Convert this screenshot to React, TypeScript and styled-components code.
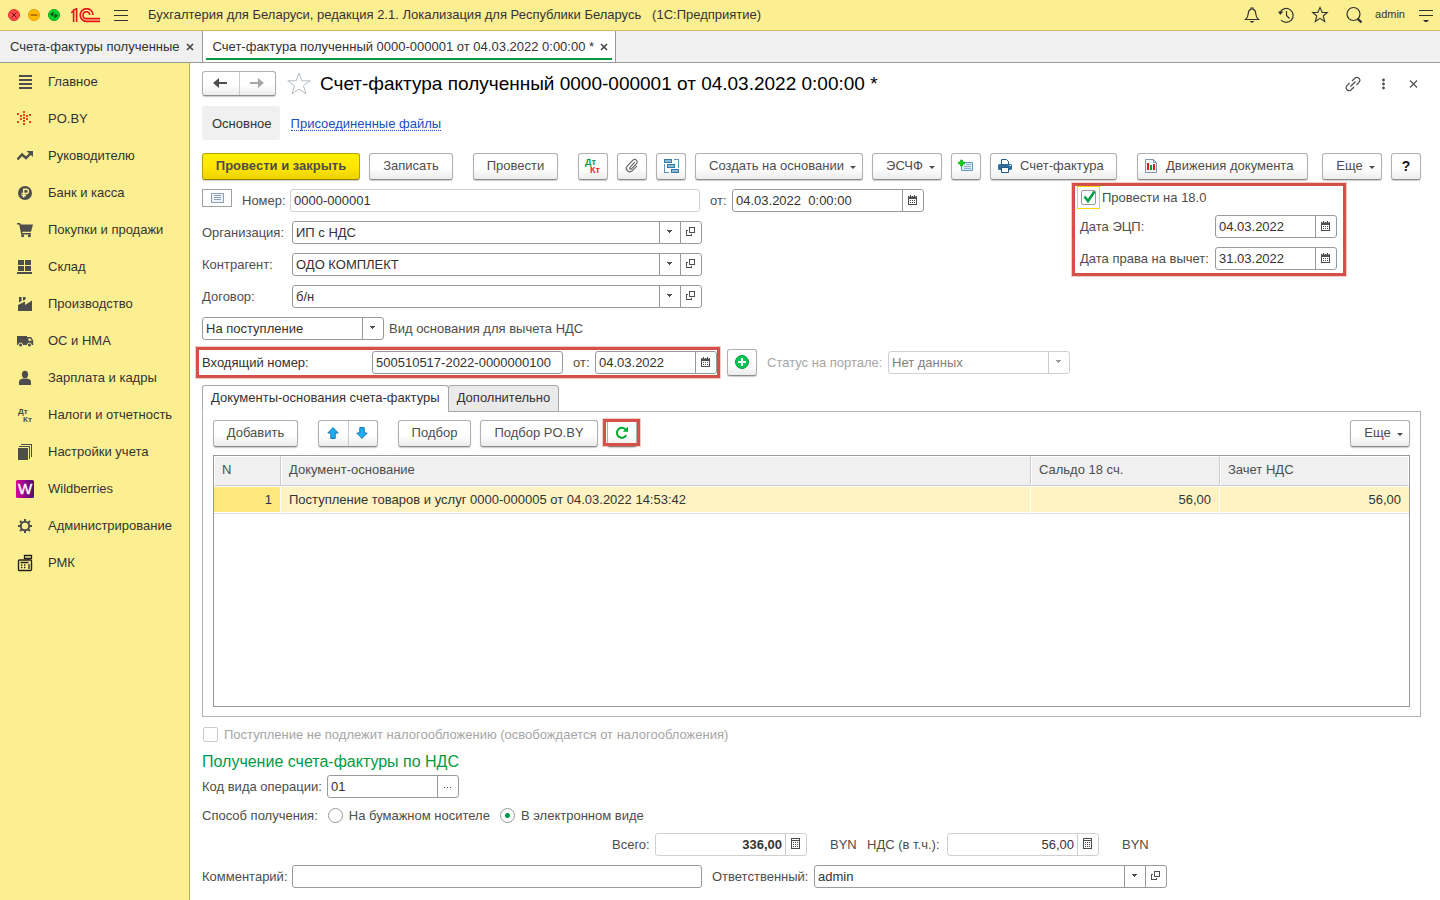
import React from "react";
import styled, { createGlobalStyle, css } from "styled-components";

const GlobalStyle = createGlobalStyle`
  *, *::before, *::after { box-sizing: border-box; }
  body { margin: 0; background: #fff; }
  body, button, input, select {
    font-family: "Liberation Sans", Arial, sans-serif;
    font-size: 13px;
    color: #333;
  }
  button, input, select { margin: 0; padding: 0; border: 0; background: none; outline: none; border-radius: 0; }
  svg { display: block; flex: none; }
`;

const color = {
  brand: "#fcef92",
  ink: "#333",
  label: "#4d4d4d",
  line: "#999",
  faint: "#ccc",
  green: "#009a44",
  mark: "#d35148",
};

/* ---------- shell ---------- */

const Shell = styled.div`
  display: flex;
  flex-direction: column;
  min-height: 100vh;
`;

const TitleBar = styled.header`
  display: flex;
  align-items: center;
  height: 31px;
  padding: 0 7px 0 8px;
  background: ${color.brand};
  border-bottom: 1px solid #c9bc5e;
`;

const WindowButtons = styled.div`
  display: flex;
  gap: 8px;
  margin-right: 11px;
`;

const PlainButton = styled.button`
  display: flex;
  align-items: center;
  justify-content: center;
`;

const AppTitle = styled.span`
  flex: 1;
  margin-left: 20px;
  padding-bottom: 2px;
  white-space: pre;
`;

const HeaderTools = styled.div`
  display: flex;
  align-items: center;
  gap: 16px;
`;

const UserName = styled.span`
  margin: 0 14px 0 12px;
  padding-bottom: 2px;
  font-size: 11px;
`;

const WindowTabs = styled.nav`
  display: flex;
  height: 32px;
  background: #f0f0f0;
  border-bottom: 1px solid ${color.line};
`;

const WindowTab = styled.div<{ $active?: boolean }>`
  position: relative;
  display: flex;
  align-items: center;
  gap: 6px;
  padding: 0 8px 0 10px;
  border-right: 1px solid ${color.line};
  ${(p) =>
    p.$active &&
    css`
      padding-right: 7px;
      background: #fff;
      &::after {
        content: "";
        position: absolute;
        left: 3px;
        right: 3px;
        bottom: 2px;
        height: 2px;
        background: ${color.green};
      }
    `}
`;

const Columns = styled.div`
  flex: 1;
  display: flex;
`;

const Sidebar = styled.nav`
  flex: none;
  width: 190px;
  background: ${color.brand};
  border-right: 1px solid #b5ab62;
`;

const SideItem = styled.a`
  display: flex;
  align-items: center;
  gap: 13px;
  height: 37px;
  padding-left: 15px;
  color: ${color.ink};
  text-decoration: none;
`;

const Page = styled.main`
  flex: 1;
  min-width: 0;
  display: flex;
  flex-direction: column;
  padding: 8px 19px 12px 12px;
`;

/* ---------- page heading ---------- */

const HeadRow = styled.div`
  display: flex;
  align-items: center;
  height: 25px;
`;

const raised = css`
  border: 1px solid #b0b0b0;
  border-bottom-color: #8c8c8c;
  border-radius: 3px;
  background: linear-gradient(#fff 55%, #ececec);
  box-shadow: 0 1px 1px rgba(0, 0, 0, 0.2);
`;

const SplitButtons = styled.div<{ $width: number; $height: number; $apart?: number }>`
  display: flex;
  flex: none;
  width: ${(p) => p.$width}px;
  height: ${(p) => p.$height}px;
  margin-left: ${(p) => p.$apart ?? 0}px;
  ${raised}
  button { flex: 1; padding: 0 1px 2px 0; }
  button + button { border-left: 1px solid ${color.faint}; }
`;

const DocTitle = styled.h1`
  flex: 1;
  margin: 0 0 0 9px;
  font-size: 19px;
  font-weight: 400;
  color: #000;
`;

const HeadTools = styled.div`
  display: flex;
  gap: 14px;
`;

const SectionLinks = styled.nav`
  display: flex;
  align-items: center;
  gap: 11px;
  margin-top: 10px;
`;

const CurrentSection = styled.span`
  padding: 1px 8px 0 10px;
  line-height: 33px;
  background: #f0f0f0;
  border-radius: 3px;
`;

const SectionLink = styled.a`
  padding-top: 2px;
  color: #1a4fc0;
  text-decoration: none;
  line-height: 12px;
  border-bottom: 1px dotted #1a4fc0;
`;

/* ---------- buttons ---------- */

const Bar = styled.div<{ $top?: number }>`
  display: flex;
  gap: 9px;
  margin-top: ${(p) => p.$top ?? 0}px;
`;

const Button = styled.button<{
  $width?: number;
  $kind?: "primary" | "menu" | "icon";
  $apart?: number | "auto";
}>`
  display: flex;
  align-items: center;
  justify-content: center;
  flex: none;
  width: ${(p) => p.$width ?? 30}px;
  height: 27px;
  padding-bottom: 2px;
  margin-left: ${(p) => (p.$apart === "auto" ? "auto" : `${p.$apart ?? 0}px`)};
  color: ${color.label};
  white-space: nowrap;
  ${raised}
  ${(p) => p.$kind === "menu" && css`
    gap: 6px;
    padding-left: 7px;
  `}
  ${(p) => p.$kind === "icon" && css`
    gap: 8px;
    justify-content: flex-start;
    padding-left: 7px;
  `}
  ${(p) => p.$kind === "primary" && css`
    font-weight: 700;
    border-color: #b5a000;
    border-bottom-color: #8f8000;
    background: linear-gradient(#fff000, #ffe600 55%, #ecd200);
  `}
`;

const HelpMark = styled.b`
  font-size: 14px;
  color: #111;
`;

/* ---------- fields ---------- */

const Row = styled.div<{ $top?: number; $height?: number }>`
  display: flex;
  align-items: center;
  min-height: ${(p) => p.$height ?? 23}px;
  margin-top: ${(p) => p.$top ?? 0}px;
`;

const Label = styled.label<{ $width?: number; $before?: number; $tone?: string }>`
  flex: none;
  width: ${(p) => (p.$width ? `${p.$width}px` : "auto")};
  margin-left: ${(p) => p.$before ?? 0}px;
  color: ${(p) => p.$tone ?? color.label};
  white-space: nowrap;
`;

const FieldBox = styled.span<{ $width: number; $muted?: boolean }>`
  display: flex;
  flex: none;
  width: ${(p) => p.$width}px;
  height: 23px;
  border: 1px solid ${(p) => (p.$muted ? "#d0d0d0" : color.line)};
  border-radius: 3px;
  background: #fff;
  overflow: hidden;
  > * + * { border-left: 1px solid ${(p) => (p.$muted ? color.faint : color.line)}; }
`;

const TextInput = styled.input<{ $number?: boolean; $bold?: boolean }>`
  flex: 1;
  min-width: 0;
  padding: 0 3px;
  text-align: ${(p) => (p.$number ? "right" : "left")};
  font-weight: ${(p) => (p.$bold ? 700 : 400)};
  white-space: pre;
`;

const Choice = styled.select`
  flex: 1;
  min-width: 0;
  padding: 0 3px;
  appearance: none;
  &:disabled { color: #808080; opacity: 1; }
`;

const FieldButton = styled.button`
  display: flex;
  align-items: center;
  justify-content: center;
  flex: none;
  width: 21px;
  padding: 0 1px 2px 0;
`;

const ArrowCell = styled.span`
  display: flex;
  align-items: center;
  justify-content: center;
  flex: none;
  width: 21px;
  padding: 0 1px 2px 0;
  pointer-events: none;
`;

const CardButton = styled.button`
  display: flex;
  align-items: center;
  justify-content: center;
  align-self: flex-start;
  width: 30px;
  height: 18px;
  border: 1px solid #a0a0a0;
`;

const FormTop = styled.div`
  display: flex;
  justify-content: space-between;
  margin-top: 6px;
`;

const FormLeft = styled.div`
  display: flex;
  flex-direction: column;
  gap: 9px;
  padding-top: 3px;
`;

/* Red frame drawn round a group of controls without taking any room. */
const Marked = styled.div<{ $inset: string }>`
  position: relative;
  &::after {
    content: "";
    position: absolute;
    inset: ${(p) => p.$inset};
    border: 3px solid ${color.mark};
    box-shadow: 0 0 0 1px rgba(211, 81, 72, 0.3);
    pointer-events: none;
  }
`;

const MarkedPanel = styled(Marked)`
  align-self: flex-start;
  margin-right: 84px;
`;

const MarkedRow = styled(Marked)`
  display: flex;
  align-items: center;
`;

const Check = styled.input`
  appearance: none;
  flex: none;
  width: 15px;
  height: 15px;
  margin: 0 1px;
  border: 1px solid ${color.line};
  border-radius: 2px;
  background: #fff;
  &:disabled { border-color: ${color.faint}; }
`;

const CheckFrame = styled.span`
  position: relative;
  display: flex;
  align-items: center;
  justify-content: center;
  width: 23px;
  height: 23px;
  border: 1px solid #ffd200;
  svg { position: absolute; pointer-events: none; }
`;

const CheckRow = styled(Row)`
  margin-left: -3px;
  gap: 2px;
`;

const Radio = styled.input`
  appearance: none;
  flex: none;
  width: 15px;
  height: 15px;
  border: 1px solid ${color.line};
  border-radius: 50%;
  &:checked { background: radial-gradient(circle, ${color.green} 2px, #fff 3px); }
`;

const RadioLabel = styled.label`
  display: flex;
  align-items: center;
  gap: 6px;
  margin-left: 10px;
  color: ${color.label};
`;

/* ---------- tab panel & table ---------- */

const TabStrip = styled.div`
  display: flex;
  margin: 9px 0 -1px;
  position: relative;
`;

const Tab = styled.button<{ $active?: boolean }>`
  height: 27px;
  padding: 0 8px 2px;
  border: 1px solid #a6a6a6;
  border-radius: 3px 3px 0 0;
  background: #eaeaea;
  & + & { margin-left: -1px; }
  ${(p) => p.$active && css`
    background: #fff;
    border-bottom-color: #fff;
  `}
`;

const TabPanel = styled.section`
  flex: 1;
  display: flex;
  flex-direction: column;
  padding: 8px 10px 9px;
  border: 1px solid #b3b3b3;
`;

const TableFrame = styled.div`
  flex: 1;
  margin-top: 8px;
  border: 1px solid ${color.line};
`;

const Table = styled.table`
  width: 100%;
  table-layout: fixed;
  border-collapse: separate;
  border-spacing: 0;
`;

const Th = styled.th<{ $width?: number }>`
  width: ${(p) => (p.$width ? `${p.$width}px` : "auto")};
  height: 30px;
  padding: 0 8px 4px 7px;
  text-align: left;
  font-weight: 400;
  color: ${color.label};
  background: #f0f0f0;
  border: 1px solid;
  border-color: #fff ${color.faint} ${color.faint} #fff;
  background-clip: padding-box;
  &:last-child { border-right-color: #fff; }
`;

const Td = styled.td<{ $number?: boolean; $key?: boolean }>`
  height: 28px;
  padding: 0 8px 1px;
  text-align: ${(p) => (p.$number ? "right" : "left")};
  background: ${(p) => (p.$key ? "#ffe97f" : "#fff3c3")};
  background-clip: padding-box;
  border-top: 1px solid #fff;
  border-right: 1px solid #fff;
  border-bottom: 1px solid #ddd;
  box-shadow: inset 0 -1px #fff;
  &:last-child { border-right: 0; }
`;

const Heading = styled.h2`
  margin: 6px 0 3px;
  font-size: 16px;
  line-height: 20px;
  font-weight: 400;
  color: ${color.green};
`;

/* ---------- icons ---------- */

type SvgProps = { w: number; h?: number; box?: string; children: React.ReactNode; crisp?: boolean };
const Svg = ({ w, h = w, box, children, crisp }: SvgProps) => (
  <svg width={w} height={h} viewBox={box ?? `0 0 ${w} ${h}`} fill="none" aria-hidden="true"
    shapeRendering={crisp ? "crispEdges" : undefined}>
    {children}
  </svg>
);

const DownMark = ({ tone = "#4d4d4d" }) => (
  <Svg w={5} h={3} crisp><path d="M0 0h5v1h-1v1h-1v1h-1v-1h-1v-1h-1z" fill={tone} /></Svg>
);

const MenuMark = () => (
  <Svg w={6} h={7}><path d="M0 4h6L3 7z" fill="#4d4d4d" /></Svg>
);

const OpenIcon = () => (
  <Svg w={9} h={9} crisp>
    <path d="M3.5.5h5v5h-5z M2 3.5H.5v5h5V7" stroke="#4d4d4d" />
  </Svg>
);

const CalendarIcon = () => (
  <Svg w={9} h={10} crisp>
    <path d="M0 1h9v9H0z" fill="#4d4d4d" />
    <path d="M1 4h7v5H1z" fill="#fff" />
    <path d="M2 0h1v2H2zM6 0h1v2H6z" fill="#4d4d4d" />
    <path d="M1 1h1v1H1zM3 1h1v1H3zM5 1h1v1H5zM7 1h1v1H7z" fill="#aaa" />
    <path d="M2 5h1v1H2zM4 5h1v1H4zM6 5h1v1H6zM2 7h1v1H2zM4 7h1v1H4zM6 7h1v1H6z" fill="#4d4d4d" />
  </Svg>
);

const CalcIcon = () => (
  <Svg w={9} h={11} crisp>
    <path d="M.5.5h8v10h-8zM1 2.5h7" stroke="#4d4d4d" />
    <path d="M2 4h1v1H2zM4 4h1v1H4zM6 4h1v1H6zM2 6h1v1H2zM4 6h1v1H4zM6 6h1v1H6zM2 8h1v1H2zM4 8h1v1H4zM6 8h1v1H6z" fill="#4d4d4d" />
  </Svg>
);

const CloseMark = () => (
  <Svg w={8}><path d="M1 1l6 6M7 1L1 7" stroke="#444" strokeWidth="1.6" /></Svg>
);

const Logo = () => (
  <Svg w={29} h={15}>
    <g stroke="#e3141c" strokeWidth="1.6">
      <path d="M0 4.6L2.6 3.4V14M1.6 2.4L5.6 .8V14" />
      <path d="M22 7A6.4 6.4 0 1 0 15.3 13.4H29" />
      <path d="M18.8 7A3.4 3.4 0 1 0 15.3 10.6H29" />
    </g>
  </Svg>
);

const poDots: [number, number][] = [
  [0, 2], [0, 10], [3, 4], [3, 7], [6, 0], [6, 3], [6, 6], [6, 9], [6, 12],
  [9, 4], [9, 7], [12, 3], [12, 10],
];

const sideIcons: Record<string, React.ReactNode> = {
  main: <Svg w={20} crisp><path d="M4 3h13v2H4zM4 7h13v2H4zM4 11h13v2H4zM4 15h13v2H4z" fill="#4d4d4d" /></Svg>,
  po: (
    <Svg w={20} crisp>
      <g fill="#e8470c">{poDots.map(([x, y]) => <rect key={`${x}-${y}`} x={x + 2} y={y + 2} width="2" height="2" />)}</g>
    </Svg>
  ),
  chief: (
    <Svg w={20}>
      <path d="M2.5 13.5L7 8.5L11 12L16 7" stroke="#4d4d4d" strokeWidth="2.4" />
      <path d="M11.5 5H18v6z" fill="#4d4d4d" />
    </Svg>
  ),
  bank: (
    <Svg w={20}>
      <circle cx="10" cy="10" r="7" fill="#4d4d4d" />
      <path d="M8.7 14.5V6.3h2.6a2.1 2.1 0 0 1 0 4.2H6.6M6.6 12.6h4.6" stroke={color.brand} strokeWidth="1.5" />
    </Svg>
  ),
  cart: (
    <Svg w={20}>
      <path d="M2 3h3.2l.6 1.6H18l-2 7.2H7.2l.2 1.2H16v1.4H6.2L4.2 4.4H2z" fill="#4d4d4d" />
      <circle cx="7.6" cy="15.8" r="1.5" fill="#4d4d4d" /><circle cx="14.4" cy="15.8" r="1.5" fill="#4d4d4d" />
    </Svg>
  ),
  store: <Svg w={20} crisp><path d="M3 3h6v5H3zM10 3h6v5h-6zM3 9h6v5H3zM10 9h6v5h-6zM2 15h15v2H2z" fill="#4d4d4d" /></Svg>,
  plant: (
    <Svg w={20}>
      <path d="M3 17v-6L10 7.4V11l7-4.6V17z" fill="#4d4d4d" />
      <path d="M4 3h2.6v4L4 8.4zM8 3h2.6v2.6L8 6.8z" fill="#4d4d4d" />
    </Svg>
  ),
  truck: (
    <Svg w={20}>
      <path d="M2 5h10v9H2zM12 6h4l2.2 3.4V14H12z" fill="#4d4d4d" />
      <path d="M13.4 7.4h2l1.4 2.4h-3.4z" fill={color.brand} />
      <circle cx="5.6" cy="14" r="2" fill="#4d4d4d" stroke={color.brand} /><circle cx="14.4" cy="14" r="2" fill="#4d4d4d" stroke={color.brand} />
    </Svg>
  ),
  person: (
    <Svg w={20}>
      <ellipse cx="10" cy="6.4" rx="3.1" ry="3.6" fill="#4d4d4d" />
      <path d="M4 17v-3.4C4 12 6 11 8 10.6h4c2 .4 4 1.4 4 3V17z" fill="#4d4d4d" />
    </Svg>
  ),
  tax: (
    <Svg w={20}>
      <text x="3" y="9" fontSize="8" fontWeight="700" fill="#4d4d4d">Дт</text>
      <text x="8" y="17" fontSize="8" fontWeight="700" fill="#4d4d4d">Кт</text>
    </Svg>
  ),
  books: (
    <Svg w={20} crisp>
      <path d="M3 6h10v12H3z" fill="#4d4d4d" />
      <path d="M4 4.5h10.5V17M6 2.5h10.5V15" stroke="#4d4d4d" />
    </Svg>
  ),
  wb: (
    <Svg w={20}>
      <defs><linearGradient id="wb"><stop stopColor="#d8009c" /><stop offset="1" stopColor="#481173" /></linearGradient></defs>
      <rect x="1" y="1" width="18" height="18" rx="1.5" fill="url(#wb)" />
      <text x="10" y="15" fontSize="15" fill="#fff" stroke="#fff" strokeWidth=".4" textAnchor="middle">W</text>
    </Svg>
  ),
  gear: (
    <Svg w={20}>
      <circle cx="10" cy="10" r="4.2" stroke="#4d4d4d" strokeWidth="2" />
      <path d="M10 3v2.4M10 14.6V17M3 10h2.4M14.6 10H17M5 5l1.8 1.8M13.2 13.2L15 15M15 5l-1.8 1.8M6.8 13.2L5 15" stroke="#4d4d4d" strokeWidth="2" />
    </Svg>
  ),
  till: (
    <Svg w={20}>
      <rect x="3.5" y="7" width="13" height="10.5" rx="1" stroke="#222" strokeWidth="1.4" />
      <path d="M9.5 2.5h7v3h-7zM13 5.5V7M5.5 9.5h8M6 12h1.4M9 12h1.4M6 14.5h1.4M9 14.5h1.4M14 11v5" stroke="#222" strokeWidth="1.3" />
    </Svg>
  ),
};

const sections: [string, string][] = [
  ["main", "Главное"], ["po", "PO.BY"], ["chief", "Руководителю"], ["bank", "Банк и касса"],
  ["cart", "Покупки и продажи"], ["store", "Склад"], ["plant", "Производство"], ["truck", "ОС и НМА"],
  ["person", "Зарплата и кадры"], ["tax", "Налоги и отчетность"], ["books", "Настройки учета"],
  ["wb", "Wildberries"], ["gear", "Администрирование"], ["till", "РМК"],
];

const ArrowIcon = ({ tone, flip }: { tone: string; flip?: boolean }) => (
  <Svg w={14} h={12}>
    <path d={flip ? "M0 5h8V1l6 5-6 5V7H0z" : "M14 5H6V1L0 6l6 5V7h8z"} fill={tone} />
  </Svg>
);

const MoveIcon = ({ down }: { down?: boolean }) => (
  <Svg w={12} h={12}>
    <path d={down ? "M6 11.4L.8 6H3.8V.6h4.4V6h3z" : "M6 .6L.8 6H3.8v5.4h4.4V6h3z"} fill="#1cb0f6" stroke="#1478b4" />
  </Svg>
);

const DtKtIcon = () => (
  <Svg w={18} h={17}>
    <text x="1" y="8" fontSize="9" fontWeight="700" fill="#009a44">Дт</text>
    <text x="6" y="16" fontSize="9" fontWeight="700" fill="#e8262c">Кт</text>
  </Svg>
);

const ClipIcon = () => (
  <Svg w={14} h={15}>
    <path d="M9.8 4.2L5 9.3a1 1 0 0 0 1.5 1.5l5-5.2a2.4 2.4 0 0 0-3.6-3.4L2.4 7.9a3.4 3.4 0 0 0 5 4.8l4.6-4.8" stroke="#666" strokeWidth="1.2" />
  </Svg>
);

const StructureIcon = () => (
  <Svg w={15} h={14} crisp>
    <path d="M.5.5h7v3h-7zM3.5 5.5h7v3h-7zM7.5 10.5h7v3h-7z" fill="#8cb8d8" stroke="#3a78a8" />
    <path d="M10 .5h4.5V9M.5 5v8.5H5" stroke="#5c94bc" />
  </Svg>
);

const AddCardIcon = () => (
  <Svg w={16} h={14}>
    <path d="M3.5 3.5h11v8h-11z" fill="#dcebf5" stroke="#5c9abf" />
    <path d="M8 5.5h5M6 7.5h7M6 9.5h7" stroke="#8ab4cf" />
    <path d="M2.5 1h2v2h2v2h-2v2h-2V5h-2V3h2z" fill="#12d612" stroke="#0a9a1a" strokeWidth=".6" />
  </Svg>
);

const PrinterIcon = () => (
  <Svg w={14} h={14}>
    <path d="M3.5 5V.5h5l2 2V5" fill="#fff" stroke="#1e5a8c" />
    <rect x="0" y="5" width="14" height="6" rx="1.5" fill="#2f6c9e" />
    <path d="M3.5 8.5h7v5h-7z" fill="#fff" stroke="#1e5a8c" />
    <path d="M11.5 6.5H13" stroke="#fff" />
  </Svg>
);

const ReportIcon = () => (
  <Svg w={13} h={14}>
    <path d="M.5.5h8l3 3v10H.5z" fill="#f4f8fb" stroke="#7d96a8" />
    <path d="M8.5.5v3h3" stroke="#7d96a8" />
    <path d="M2 4h2v7H2zM8 5h2v6H8z" fill="#e01818" /><path d="M5 6h2v5H5z" fill="#14a028" />
  </Svg>
);

const PlusCircle = () => (
  <Svg w={16}>
    <circle cx="8" cy="8" r="6.5" fill="#00c853" stroke="#009a3a" />
    <path d="M8 4v8M4 8h8" stroke="#fff" strokeWidth="2" />
  </Svg>
);

const RefreshIcon = () => (
  <Svg w={14}>
    <path d="M11.2 9.3A5 5 0 1 1 10.4 3.2" stroke="#00a82d" strokeWidth="2" />
    <path d="M7.8 5.8H13V.8z" fill="#00a82d" />
  </Svg>
);

const BellIcon = () => (
  <Svg w={18}>
    <path d="M2.5 13.5h13c-2-2-2.5-3-2.7-5.5-.2-3-1.3-4.3-2.8-4.6V2H8v1.4C6.5 3.7 5.4 5 5.2 8c-.2 2.5-.7 3.5-2.7 5.5z" stroke="#333" strokeWidth="1.2" />
    <path d="M6.5 15h5L9 17z" fill="#333" />
  </Svg>
);

const HistoryIcon = () => (
  <Svg w={18}>
    <path d="M3.2 5.8A7 7 0 1 1 4 14.2M9.5 5v4.5l3 3" stroke="#333" strokeWidth="1.2" />
    <path d="M1 5.5h5.5L3.2 9z" fill="#333" />
  </Svg>
);

const StarIcon = () => (
  <Svg w={18}>
    <path d="M9 1.5l2.2 5h5l-4 3.5 1.5 5.5L9 12.3l-4.7 3.2L5.8 10l-4-3.5h5z" stroke="#333" strokeWidth="1.1" />
  </Svg>
);

const SearchIcon = () => (
  <Svg w={18}>
    <circle cx="8.5" cy="8" r="6.5" stroke="#333" strokeWidth="1.2" />
    <path d="M12.5 12.5l4 4" stroke="#333" strokeWidth="2.4" />
  </Svg>
);

const LinkIcon = () => (
  <Svg w={16}>
    <path d="M7 5l3-3a3 3 0 0 1 4.2 4.2L11.5 9M9 11l-3 3a3 3 0 0 1-4.2-4.2L4.5 7M5.5 10.5l5-5" stroke="#4d4d4d" strokeWidth="1.2" />
  </Svg>
);

/* ---------- composed controls ---------- */

const DateField = ({ id, value, width }: { id: string; value: string; width: number }) => (
  <FieldBox $width={width}>
    <TextInput id={id} defaultValue={value} />
    <FieldButton aria-label="Выбрать дату"><CalendarIcon /></FieldButton>
  </FieldBox>
);

const RefField = ({ id, value, width }: { id: string; value: string; width: number }) => (
  <FieldBox $width={width}>
    <TextInput id={id} defaultValue={value} />
    <FieldButton aria-label="Выбрать"><DownMark /></FieldButton>
    <FieldButton aria-label="Открыть"><OpenIcon /></FieldButton>
  </FieldBox>
);

const SumField = ({ id, value, bold }: { id: string; value: string; bold?: boolean }) => (
  <FieldBox $width={152} $muted>
    <TextInput id={id} defaultValue={value} $number $bold={bold} readOnly />
    <FieldButton aria-label="Калькулятор"><CalcIcon /></FieldButton>
  </FieldBox>
);

export default function App() {
  return (
    <Shell>
      <GlobalStyle />
      <TitleBar>
        <WindowButtons>
          <PlainButton aria-label="Закрыть окно">
            <Svg w={12}><circle cx="6" cy="6" r="5.5" fill="#fc4b48" stroke="#e03030" /><path d="M3.5 3.5l5 5M8.5 3.5l-5 5" stroke="#7a1010" /></Svg>
          </PlainButton>
          <PlainButton aria-label="Свернуть">
            <Svg w={12}><circle cx="6" cy="6" r="5.5" fill="#ffbb00" stroke="#e89a00" /><path d="M2.5 6h7" stroke="#a06000" strokeWidth="1.5" /></Svg>
          </PlainButton>
          <PlainButton aria-label="Развернуть">
            <Svg w={12}><circle cx="6" cy="6" r="5.5" fill="#0cd62c" stroke="#08a820" /><path d="M5.5 2v6L2 5.5zM6.5 10V4L10 6.5z" fill="#065a10" /></Svg>
          </PlainButton>
        </WindowButtons>
        <Logo />
        <PlainButton aria-label="Меню">
          <Svg w={28} h={12} crisp><path d="M14 1.5h14M14 6.5h14M14 11.5h14" stroke="#333" /></Svg>
        </PlainButton>
        <AppTitle>{"Бухгалтерия для Беларуси, редакция 2.1. Локализация для Республики Беларусь   (1С:Предприятие)"}</AppTitle>
        <HeaderTools>
          <PlainButton aria-label="Уведомления"><BellIcon /></PlainButton>
          <PlainButton aria-label="История"><HistoryIcon /></PlainButton>
          <PlainButton aria-label="Избранное"><StarIcon /></PlainButton>
          <PlainButton aria-label="Поиск"><SearchIcon /></PlainButton>
        </HeaderTools>
        <UserName>admin</UserName>
        <PlainButton aria-label="Настройки">
          <Svg w={14} h={14}><path d="M0 2.5h14M0 7.5h14" stroke="#333" /><path d="M4 12h6l-3 3z" fill="#333" /></Svg>
        </PlainButton>
      </TitleBar>

      <WindowTabs>
        <WindowTab>Счета-фактуры полученные<PlainButton aria-label="Закрыть"><CloseMark /></PlainButton></WindowTab>
        <WindowTab $active>Счет-фактура полученный 0000-000001 от 04.03.2022 0:00:00 *<PlainButton aria-label="Закрыть"><CloseMark /></PlainButton></WindowTab>
      </WindowTabs>

      <Columns>
        <Sidebar>
          {sections.map(([icon, name]) => (
            <SideItem key={icon} href="#">{sideIcons[icon]}{name}</SideItem>
          ))}
        </Sidebar>

        <Page>
          <HeadRow>
            <SplitButtons $width={74} $height={25}>
              <PlainButton aria-label="Назад"><ArrowIcon tone="#4d4d4d" /></PlainButton>
              <PlainButton aria-label="Вперед"><ArrowIcon tone="#a6a6a6" flip /></PlainButton>
            </SplitButtons>
            <Svg w={35} h={26} box="-11 1 35 26"><path d="M12 3l2.8 7.8h8.4l-6.8 5 2.6 8L12 19l-7 4.8 2.6-8-6.8-5h8.4z" stroke="#b4bcc4" /></Svg>
            <DocTitle>Счет-фактура полученный 0000-000001 от 04.03.2022 0:00:00 *</DocTitle>
            <HeadTools>
              <PlainButton aria-label="Ссылка"><LinkIcon /></PlainButton>
              <PlainButton aria-label="Действия">
                <Svg w={16}><g fill="#4d4d4d"><circle cx="8.5" cy="4" r="1.4" /><circle cx="8.5" cy="8" r="1.4" /><circle cx="8.5" cy="12" r="1.4" /></g></Svg>
              </PlainButton>
              <PlainButton aria-label="Закрыть форму">
                <Svg w={16}><path d="M5 4.5l7 7M12 4.5l-7 7" stroke="#4d4d4d" strokeWidth="1.1" /></Svg>
              </PlainButton>
            </HeadTools>
          </HeadRow>

          <SectionLinks>
            <CurrentSection>Основное</CurrentSection>
            <SectionLink href="#">Присоединенные файлы</SectionLink>
          </SectionLinks>

          <Bar $top={13}>
            <Button $kind="primary" $width={158}>Провести и закрыть</Button>
            <Button $width={84}>Записать</Button>
            <Button $width={85} $apart={11}>Провести</Button>
            <Button $apart={11} aria-label="Дт Кт"><DtKtIcon /></Button>
            <Button aria-label="Файлы"><ClipIcon /></Button>
            <Button aria-label="Структура"><StructureIcon /></Button>
            <Button $kind="menu" $width={168}>Создать на основании<MenuMark /></Button>
            <Button $kind="menu" $width={70}>ЭСЧФ<MenuMark /></Button>
            <Button aria-label="Добавить карточку"><AddCardIcon /></Button>
            <Button $kind="icon" $width={127}><PrinterIcon />Счет-фактура</Button>
            <Button $kind="icon" $width={171} $apart={11}><ReportIcon />Движения документа</Button>
            <Button $kind="menu" $width={60} $apart="auto">Еще<MenuMark /></Button>
            <Button aria-label="Справка"><HelpMark>?</HelpMark></Button>
          </Bar>

          <FormTop>
            <FormLeft>
              <Row>
                <CardButton aria-label="Карточка">
                  <Svg w={13} h={10} crisp><path d="M.5.5h12v9H.5z" fill="#eef3f8" stroke="#8ca0b8" /><path d="M3 2.5h7M3 4.5h7M3 6.5h7" stroke="#8ca0b8" /></Svg>
                </CardButton>
                <Label htmlFor="num" $before={10} $width={48}>Номер:</Label>
                <FieldBox $width={410} $muted><TextInput id="num" defaultValue="0000-000001" /></FieldBox>
                <Label htmlFor="date" $before={10} $width={22}>от:</Label>
                <DateField id="date" value="04.03.2022  0:00:00" width={192} />
              </Row>
              <Row><Label htmlFor="org" $width={90}>Организация:</Label><RefField id="org" value="ИП с НДС" width={410} /></Row>
              <Row><Label htmlFor="partner" $width={90}>Контрагент:</Label><RefField id="partner" value="ОДО КОМПЛЕКТ" width={410} /></Row>
              <Row><Label htmlFor="contract" $width={90}>Договор:</Label><RefField id="contract" value="б/н" width={410} /></Row>
              <Row>
                <FieldBox $width={182}>
                  <Choice id="basis" defaultValue="a"><option value="a">На поступление</option></Choice>
                  <ArrowCell><DownMark /></ArrowCell>
                </FieldBox>
                <Label htmlFor="basis" $before={5}>Вид основания для вычета НДС</Label>
              </Row>
            </FormLeft>
            <MarkedPanel $inset="-3px -9px -6px -8px">
              <CheckRow>
                <CheckFrame>
                  <Check type="checkbox" id="post18" defaultChecked />
                  <Svg w={15} h={15}><path d="M3.5 6.5L7 11L13.5 1.5" stroke="#00a048" strokeWidth="2.6" /></Svg>
                </CheckFrame>
                <Label htmlFor="post18">Провести на 18.0</Label>
              </CheckRow>
              <Row $top={6}><Label htmlFor="sign" $width={135}>Дата ЭЦП:</Label><DateField id="sign" value="04.03.2022" width={122} /></Row>
              <Row $top={9}><Label htmlFor="deduct" $width={135}>Дата права на вычет:</Label><DateField id="deduct" value="31.03.2022" width={122} /></Row>
            </MarkedPanel>
          </FormTop>

          <Row $top={9} $height={27}>
            <MarkedRow $inset="-4px -3px -4px -6px">
              <Label htmlFor="incoming" $width={170} $tone={color.ink}>Входящий номер:</Label>
              <FieldBox $width={191}><TextInput id="incoming" defaultValue="500510517-2022-0000000100" /></FieldBox>
              <Label htmlFor="incDate" $before={10} $width={22}>от:</Label>
              <DateField id="incDate" value="04.03.2022" width={122} />
            </MarkedRow>
            <Button $apart={10} aria-label="Добавить"><PlusCircle /></Button>
            <Label htmlFor="status" $before={10} $width={121} $tone="#a6a6a6">Статус на портале:</Label>
            <FieldBox $width={182} $muted>
              <Choice id="status" disabled defaultValue="a"><option value="a">Нет данных</option></Choice>
              <ArrowCell><DownMark tone="#999" /></ArrowCell>
            </FieldBox>
          </Row>

          <TabStrip role="tablist">
            <Tab role="tab" aria-selected="true" $active>Документы-основания счета-фактуры</Tab>
            <Tab role="tab" aria-selected="false">Дополнительно</Tab>
          </TabStrip>
          <TabPanel role="tabpanel">
            <Bar>
              <Button $width={85}>Добавить</Button>
              <SplitButtons $width={60} $height={27} $apart={11}>
                <PlainButton aria-label="Вверх"><MoveIcon /></PlainButton>
                <PlainButton aria-label="Вниз"><MoveIcon down /></PlainButton>
              </SplitButtons>
              <Button $width={73} $apart={11}>Подбор</Button>
              <Button $width={118}>Подбор PO.BY</Button>
              <MarkedRow $inset="-1px -3px 1px -4px"><Button aria-label="Обновить"><RefreshIcon /></Button></MarkedRow>
              <Button $kind="menu" $width={60} $apart="auto">Еще<MenuMark /></Button>
            </Bar>
            <TableFrame>
              <Table>
                <thead>
                  <tr>
                    <Th $width={67}>N</Th>
                    <Th>Документ-основание</Th>
                    <Th $width={189}>Сальдо 18 сч.</Th>
                    <Th $width={189}>Зачет НДС</Th>
                  </tr>
                </thead>
                <tbody>
                  <tr>
                    <Td $number $key>1</Td>
                    <Td>Поступление товаров и услуг 0000-000005 от 04.03.2022 14:53:42</Td>
                    <Td $number>56,00</Td>
                    <Td $number>56,00</Td>
                  </tr>
                </tbody>
              </Table>
            </TableFrame>
          </TabPanel>

          <Row $top={6}>
            <Check type="checkbox" id="exempt" disabled />
            <Label htmlFor="exempt" $before={5} $tone="#a6a6a6">Поступление не подлежит налогообложению (освобождается от налогообложения)</Label>
          </Row>
          <Heading>Получение счета-фактуры по НДС</Heading>
          <Row>
            <Label htmlFor="opcode" $width={125}>Код вида операции:</Label>
            <FieldBox $width={132}>
              <TextInput id="opcode" defaultValue="01" />
              <FieldButton aria-label="Выбрать код"><Svg w={9} h={5} crisp><path d="M1 4h1v1H1zM4 4h1v1H4zM7 4h1v1H7z" fill="#4d4d4d" /></Svg></FieldButton>
            </FieldBox>
          </Row>
          <Row $top={6} role="radiogroup" aria-label="Способ получения">
            <Label as="span">Способ получения:</Label>
            <RadioLabel><Radio type="radio" name="way" />На бумажном носителе</RadioLabel>
            <RadioLabel><Radio type="radio" name="way" defaultChecked />В электронном виде</RadioLabel>
          </Row>
          <Row $top={6}>
            <Label htmlFor="total" $before={410} $width={43}>Всего:</Label>
            <SumField id="total" value="336,00" bold />
            <Label as="span" $before={23} $width={37}>BYN</Label>
            <Label htmlFor="vat" $width={80}>НДС (в т.ч.):</Label>
            <SumField id="vat" value="56,00" />
            <Label as="span" $before={23}>BYN</Label>
          </Row>
          <Row $top={9}>
            <Label htmlFor="comment" $width={90}>Комментарий:</Label>
            <FieldBox $width={410}><TextInput id="comment" /></FieldBox>
            <Label htmlFor="owner" $before={10} $width={102}>Ответственный:</Label>
            <RefField id="owner" value="admin" width={353} />
          </Row>
        </Page>
      </Columns>
    </Shell>
  );
}
